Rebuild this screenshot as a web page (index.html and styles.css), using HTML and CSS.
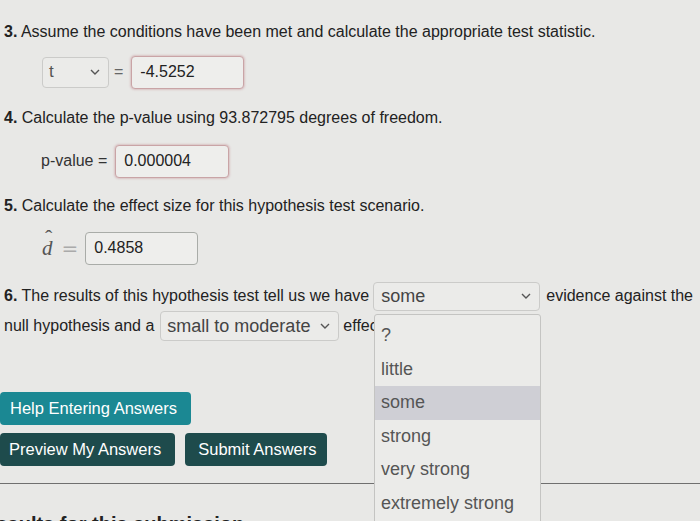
FILE: index.html
```html
<!DOCTYPE html>
<html lang="en">
<head>
  <meta charset="UTF-8">
  <meta name="viewport" content="width=device-width, initial-scale=1.0">
  <title>Problem 3-6</title>
  <link rel="stylesheet" href="styles.css">
</head>
<body>
  <div class="problem">
    <p class="question q3"><b>3.</b> Assume the conditions have been met and calculate the appropriate test statistic.</p>
    <div class="answer-row row3">
      <div class="select select-stat">
        <span>t</span>
        <svg class="chevron" viewBox="0 0 10 6" width="10" height="6"><path d="M1 1 L5 5 L9 1" fill="none" stroke="#555" stroke-width="1.4"/></svg>
      </div>
      <span class="eq">=</span>
      <div class="input input-flag input-stat">-4.5252</div>
    </div>

    <p class="question q4"><b>4.</b> Calculate the p-value using 93.872795 degrees of freedom.</p>
    <div class="answer-row row4">
      <span class="label">p-value =</span>
      <div class="input input-flag input-p">0.000004</div>
    </div>

    <p class="question q5"><b>5.</b> Calculate the effect size for this hypothesis test scenario.</p>
    <div class="answer-row row5">
      <span class="dhat">d<span class="hat">ˆ</span></span>
      <span class="eq-serif">=</span>
      <div class="input input-d">0.4858</div>
    </div>

    <div class="q6">
      <div class="q6-line">
        <span><b>6.</b> The results of this hypothesis test tell us we have</span>
        <div class="select select-evidence">
          <span>some</span>
          <svg class="chevron" viewBox="0 0 10 6" width="10" height="6"><path d="M1 1 L5 5 L9 1" fill="none" stroke="#555" stroke-width="1.4"/></svg>
        </div>
        <span>evidence against the</span>
      </div>
      <div class="q6-line">
        <span>null hypothesis and a</span>
        <div class="select select-size">
          <span>small to moderate</span>
          <svg class="chevron" viewBox="0 0 10 6" width="10" height="6"><path d="M1 1 L5 5 L9 1" fill="none" stroke="#555" stroke-width="1.4"/></svg>
        </div>
        <span>effect size.</span>
      </div>
    </div>

    <div class="buttons">
      <button class="btn btn-help">Help Entering Answers</button>
      <div class="btn-row">
        <button class="btn btn-dark">Preview My Answers</button>
        <button class="btn btn-dark">Submit Answers</button>
      </div>
    </div>

    <hr class="divider">
    <h3 class="results">Results for this submission</h3>

    <ul class="dropdown">
      <li>?</li>
      <li>little</li>
      <li class="active">some</li>
      <li>strong</li>
      <li>very strong</li>
      <li>extremely strong</li>
    </ul>
  </div>
</body>
</html>
```

FILE: styles.css
```css
body {
  margin: 0;
  background: #e8e8e6;
  font-family: "Liberation Sans", Arial, sans-serif;
  font-size: 16px;
  color: #222;
  overflow: hidden;
}
.problem {
  position: relative;
  padding-left: 4px;
  height: 521px;
}
.question {
  margin: 0;
  line-height: 18px;
}
.q3 {
  padding-top: 23px;
}
.answer-row {
  display: flex;
  align-items: center;
  margin-left: 38px;
}
.row3 {
  margin-top: 14px;
  height: 34px;
}
.q4 {
  margin-top: 20px;
}
.row4 {
  margin-top: 17px;
  height: 34px;
  margin-left: 37px;
}
.q5 {
  margin-top: 19px;
}
.row5 {
  margin-top: 16px;
  height: 34px;
}
.select {
  display: flex;
  align-items: center;
  justify-content: space-between;
  box-sizing: border-box;
  border: 1px solid #cbcbc9;
  border-radius: 4px;
  background: #ebebe9;
  color: #555;
}
.select-stat {
  width: 67px;
  height: 31px;
  padding: 0 8px 0 6px;
  font-size: 17px;
}
.chevron {
  display: block;
}
.eq {
  margin: 0 8px 0 5px;
  color: #666;
}
.input {
  box-sizing: border-box;
  height: 33px;
  border: 1px solid #b9b4b2;
  border-radius: 4px;
  background: #eeeeec;
  padding: 0 8px;
  display: flex;
  align-items: center;
  color: #222;
}
.input-flag {
  border-color: #c9a4a6;
  box-shadow: 0 0 2px 1px rgba(190, 120, 130, 0.35);
}
.input-stat {
  width: 113px;
}
.label {
  color: #333;
  margin-right: 8px;
}
.input-p {
  width: 114px;
}
.dhat {
  position: relative;
  font-family: "Liberation Serif", "Times New Roman", serif;
  font-style: italic;
  font-size: 21px;
  color: #555;
}
.hat {
  position: absolute;
  left: 3px;
  top: -11px;
  font-style: normal;
  font-size: 22px;
}
.eq-serif {
  font-family: "DejaVu Sans", sans-serif;
  font-size: 20px;
  color: #aaa;
  margin: 0 7px 0 9px;
}
.input-d {
  width: 113px;
  border-color: #a9aca8;
}
.q6 {
  margin-top: 16px;
}
.q6-line {
  display: flex;
  align-items: center;
  white-space: nowrap;
  height: 30px;
}
.select-evidence {
  width: 167px;
  height: 29px;
  margin: 0 6px 0 4px;
  padding: 0 8px 0 7px;
  font-size: 18px;
  color: #444;
}
.select-size {
  width: 179px;
  height: 30px;
  margin: 0 4px 0 6px;
  padding: 0 8px 0 6px;
  font-size: 18px;
  color: #444;
}
.buttons {
  margin-left: -4px;
  margin-top: 51px;
  display: flex;
  flex-direction: column;
  gap: 8px;
}
.btn-row {
  display: flex;
  gap: 10px;
}
.btn {
  border: none;
  border-radius: 4px;
  height: 33px;
  font-family: "Liberation Sans", Arial, sans-serif;
  font-size: 16.5px;
  color: #fff;
  padding: 0 14px 0 14px;
  cursor: pointer;
}
.btn-help {
  align-self: flex-start;
  background: #1b8893;
  padding-left: 10px;
  padding-right: 14px;
}
.btn-dark {
  background: #1e4b4c;
  padding-left: 9px;
}
.btn-dark + .btn-dark {
  padding: 0 10px 0 13px;
}
.divider {
  margin: 17px 0 0 -4px;
  border: none;
  border-top: 1px solid #6f6f6f;
}
.results {
  margin: 29px 0 0 -22px;
  font-size: 20px;
  font-weight: bold;
  color: #222;
}
.dropdown {
  position: absolute;
  left: 374px;
  top: 314px;
  width: 167px;
  height: 220px;
  box-sizing: border-box;
  margin: 0;
  padding: 4px 0 0;
  list-style: none;
  border: 1px solid #c4c4c2;
  border-radius: 3px;
  background: #ebebe9;
  font-size: 18px;
  color: #555;
}
.dropdown li {
  height: 33.5px;
  line-height: 33.5px;
  padding-left: 6px;
}
.dropdown .active {
  background: #cfcfd5;
}
```
